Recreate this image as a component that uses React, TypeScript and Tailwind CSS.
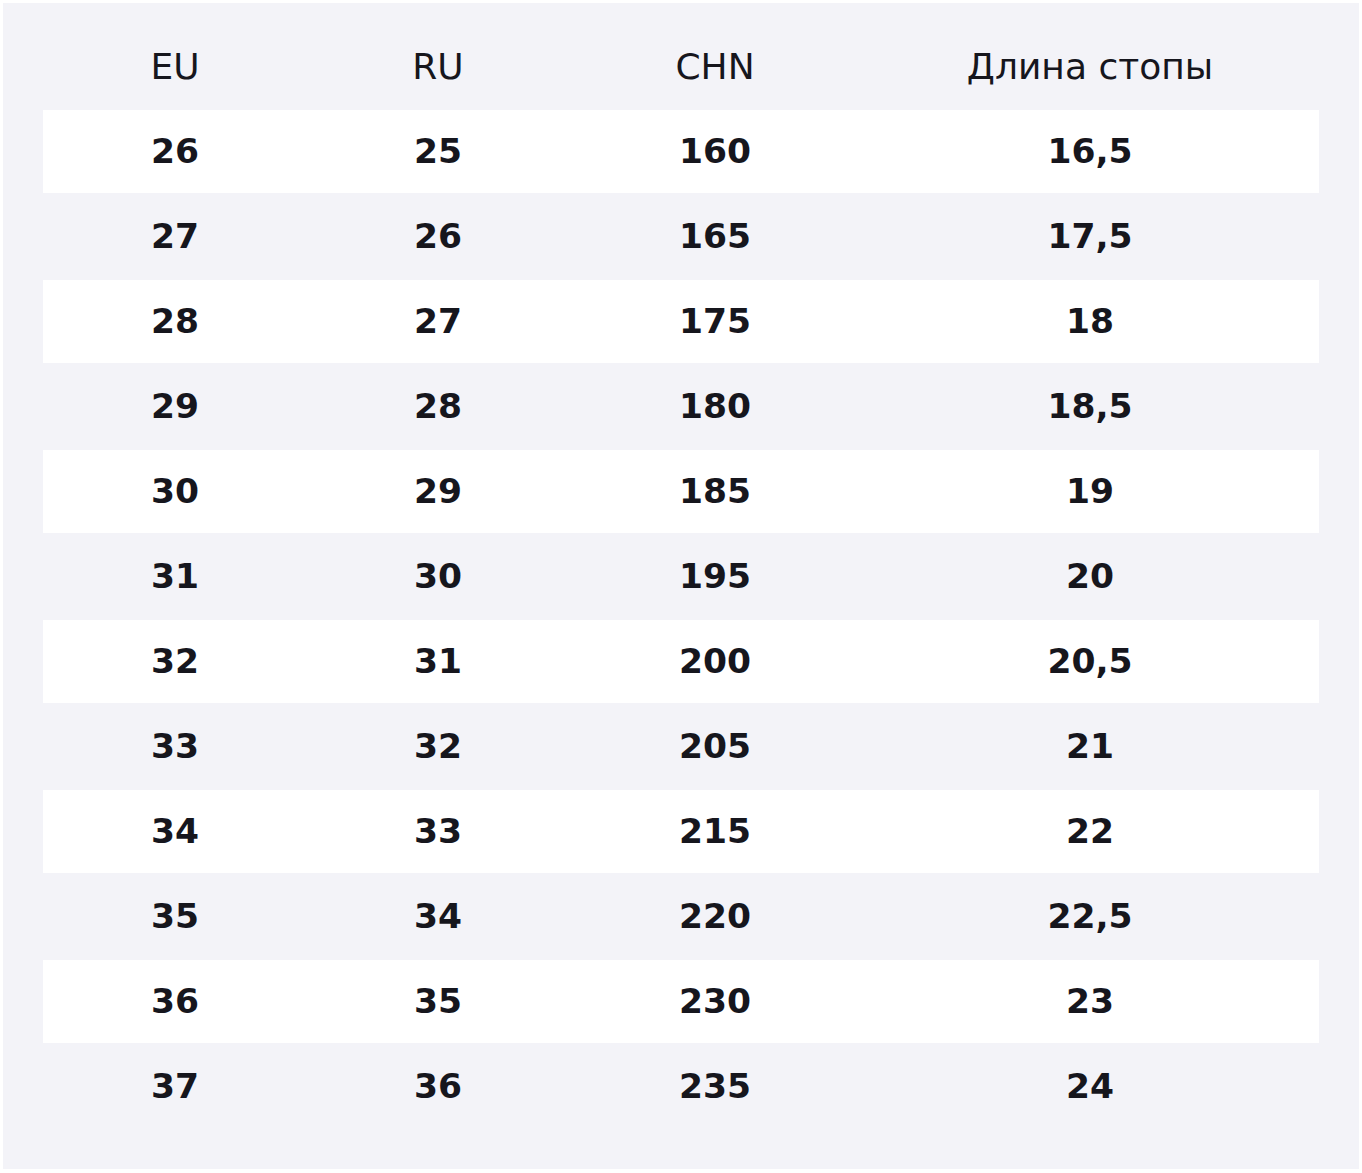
import React from "react"

const HEAD = ["EU", "RU", "CHN", "Длина стопы"]

const ROWS: Array<[string, string, string, string]> = [
    ["26", "25", "160", "16,5"],
    ["27", "26", "165", "17,5"],
    ["28", "27", "175", "18"],
    ["29", "28", "180", "18,5"],
    ["30", "29", "185", "19"],
    ["31", "30", "195", "20"],
    ["32", "31", "200", "20,5"],
    ["33", "32", "205", "21"],
    ["34", "33", "215", "22"],
    ["35", "34", "220", "22,5"],
    ["36", "35", "230", "23"],
    ["37", "36", "235", "24"],
]

const COLS = "grid grid-cols-[264px_262px_292px_1fr] text-center"

export default function App() {
    return (
        <div className="min-h-screen bg-white p-[3px] font-['DejaVu_Sans',sans-serif] text-[#16161d]">
            <div className="w-[1356px] h-[1166px] bg-[#f3f3f8] px-[40px]">
                {/* header */}
                <div className={`${COLS} pt-[42px] pb-[21px] text-[36px] leading-[44px]`}>
                    {HEAD.map((h) => (
                        <div key={h}>{h}</div>
                    ))}
                </div>
                {ROWS.map((row, i) => (
                    <div
                        key={row[0]}
                        className={`${COLS} items-center text-[34.5px] font-bold ${
                            i % 2 === 0 ? "h-[83px] bg-white" : "h-[87px]"
                        }`}
                    >
                        {row.map((cell, j) => (
                            <div key={j}>{cell}</div>
                        ))}
                    </div>
                ))}
            </div>
        </div>
    )
}
